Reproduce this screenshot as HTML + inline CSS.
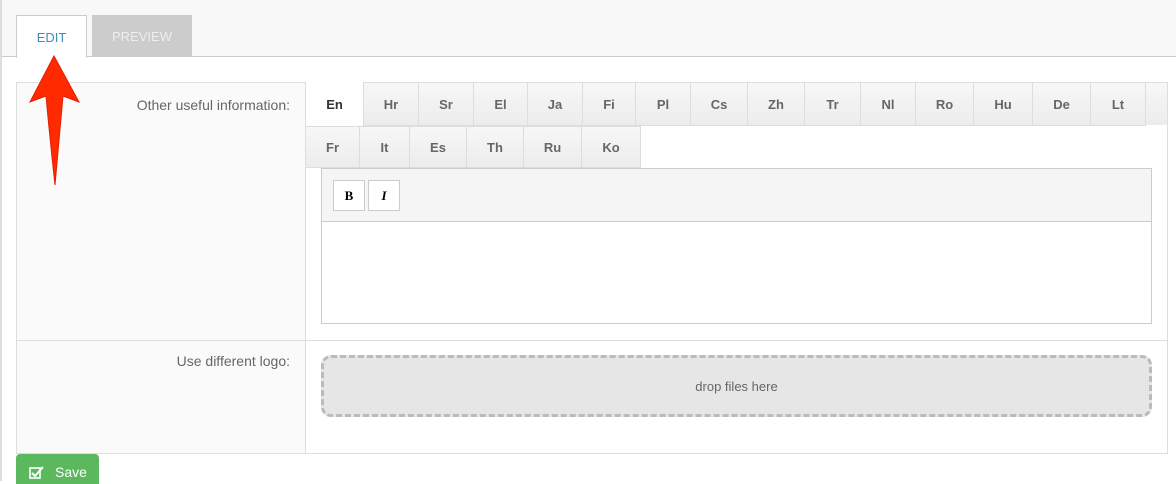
<!DOCTYPE html>
<html><head><style>
*{box-sizing:border-box;margin:0;padding:0}
body{width:1176px;height:481px;overflow:hidden;background:#fff;font-family:"Liberation Sans",sans-serif;position:relative}
.a{position:absolute}
.lt{position:absolute;height:44px;border:1px solid #ddd;border-left:none;background:linear-gradient(#f7f7f7,#ececec);color:#666;font-weight:bold;font-size:13px;display:flex;align-items:center;justify-content:center}
</style></head><body>
<div class="a" style="left:0;top:0;width:1176px;height:57px;background:#f8f8f8;border-bottom:1px solid #ccc"></div>
<div class="a" style="left:0;top:0;width:2px;height:481px;background:#ddd"></div>
<div class="a" style="left:16px;top:15px;width:71px;height:43px;background:#fff;border:1px solid #ccc;border-bottom:none;color:#3c8db5;font-size:13px;display:flex;align-items:center;justify-content:center">EDIT</div>
<div class="a" style="left:92px;top:15px;width:100px;height:42px;background:#ccc;color:#eee;font-size:13px;display:flex;align-items:center;justify-content:center">PREVIEW</div>

<div class="a" style="left:16px;top:82px;width:1152px;height:372px;border:1px solid #ddd;background:#fff"></div>
<div class="a" style="left:17px;top:83px;width:289px;height:370px;background:#fafafa;border-right:1px solid #ddd"></div>
<div class="a" style="left:17px;top:340px;width:1150px;height:1px;background:#ddd"></div>
<div class="a" style="left:17px;top:97px;width:273px;text-align:right;font-size:14px;color:#666">Other useful information:</div>
<div class="a" style="left:17px;top:353px;width:273px;text-align:right;font-size:14px;color:#666">Use different logo:</div>

<div class="lt" style="left:306px;top:82px;width:57px;background:#fff;border:none;color:#333">En</div>
<div class="lt" style="left:363px;top:82px;width:56px;border-left:1px solid #ddd">Hr</div>
<div class="lt" style="left:419px;top:82px;width:55px">Sr</div>
<div class="lt" style="left:474px;top:82px;width:54px">El</div>
<div class="lt" style="left:528px;top:82px;width:55px">Ja</div>
<div class="lt" style="left:583px;top:82px;width:53px">Fi</div>
<div class="lt" style="left:636px;top:82px;width:55px">Pl</div>
<div class="lt" style="left:691px;top:82px;width:57px">Cs</div>
<div class="lt" style="left:748px;top:82px;width:57px">Zh</div>
<div class="lt" style="left:805px;top:82px;width:56px">Tr</div>
<div class="lt" style="left:861px;top:82px;width:55px">Nl</div>
<div class="lt" style="left:916px;top:82px;width:58px">Ro</div>
<div class="lt" style="left:974px;top:82px;width:59px">Hu</div>
<div class="lt" style="left:1033px;top:82px;width:58px">De</div>
<div class="lt" style="left:1091px;top:82px;width:55px">Lt</div>
<div class="lt" style="left:1146px;top:82px;width:21px;height:43px;border-right:none;border-bottom:none"></div>

<div class="lt" style="left:306px;top:126px;width:54px;height:42px">Fr</div>
<div class="lt" style="left:360px;top:126px;width:50px;height:42px">It</div>
<div class="lt" style="left:410px;top:126px;width:57px;height:42px">Es</div>
<div class="lt" style="left:467px;top:126px;width:57px;height:42px">Th</div>
<div class="lt" style="left:524px;top:126px;width:58px;height:42px">Ru</div>
<div class="lt" style="left:582px;top:126px;width:59px;height:42px">Ko</div>

<div class="a" style="left:321px;top:168px;width:831px;height:156px;border:1px solid #ccc;background:#fff"></div>
<div class="a" style="left:322px;top:169px;width:829px;height:53px;background:#f5f5f5;border-bottom:1px solid #ccc"></div>
<div class="a" style="left:333px;top:180px;width:32px;height:31px;border:1px solid #ccc;background:#fff;font-family:'Liberation Serif',serif;font-weight:bold;font-size:13px;display:flex;align-items:center;justify-content:center">B</div>
<div class="a" style="left:368px;top:180px;width:32px;height:31px;border:1px solid #ccc;background:#fff;font-family:'Liberation Serif',serif;font-weight:bold;font-style:italic;font-size:13px;display:flex;align-items:center;justify-content:center">I</div>

<div class="a" style="left:321px;top:355px;width:831px;height:62px;background:#e6e6e6;border:3px dashed #bbb;border-radius:10px;font-size:13px;color:#666;display:flex;align-items:center;justify-content:center">drop files here</div>

<div class="a" style="left:16px;top:454px;width:83px;height:30px;background:#5cb85c;border-radius:4px 4px 0 0;color:#fff;font-size:14px">
<svg class="a" style="left:13px;top:11px" width="16" height="14" viewBox="0 0 16 14"><rect x="1" y="3" width="10" height="10" fill="none" stroke="#fff" stroke-width="1.6"/><path d="M3 8 L6 11 L14 2" fill="none" stroke="#fff" stroke-width="2"/></svg>
<span class="a" style="left:39px;top:10px">Save</span></div>

<svg class="a" style="left:25px;top:50px" width="60" height="140" viewBox="25 50 60 140"><path d="M54 56 L79 102 L63 96 Q59 140 55 185 Q50 140 46 96 L30 102 Z" fill="#ff2a00" stroke="#e02000" stroke-width="1"/></svg>
</body></html>
